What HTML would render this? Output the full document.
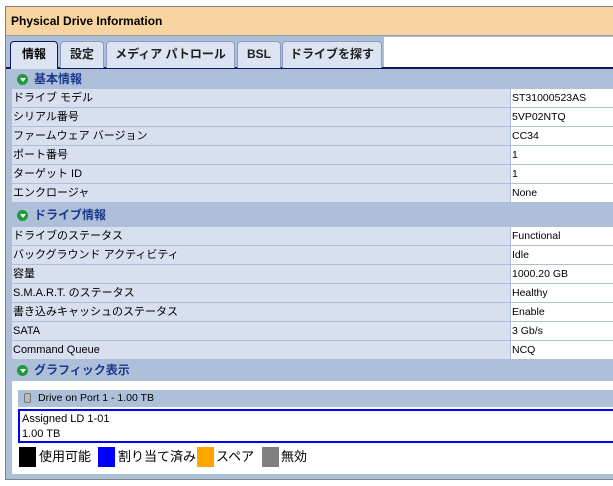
<!DOCTYPE html>
<html><head><meta charset="utf-8"><style>
*{margin:0;padding:0;box-sizing:border-box}
body{width:613px;height:486px;background:#fff;font-family:"Liberation Sans","Noto Sans CJK JP",sans-serif;font-size:11px;color:#000;position:relative;overflow:hidden}
.abs{position:absolute}
#frame{left:5px;top:6px;width:620px;height:474px;border:1px solid #808080;border-right:none;background:#aebfda}
#hdr{left:6px;top:7px;width:607px;height:29px;background:#f8d5a0;border-bottom:1px solid #999;font-weight:bold;font-size:12px;line-height:29px;padding-left:5px}
#tabsbg{left:6px;top:37px;width:378px;height:31px;background:#aebfda}
#tabline{left:6px;top:67px;width:607px;height:2px;background:#0a1a5e}
.tab{position:absolute;top:41px;height:27px;background:#dde4f1;border:1px solid #8a9ac0;border-bottom:none;border-radius:4px 4px 0 0;font-weight:bold;font-size:12px;line-height:25px;text-align:center;color:#202020}
.tab.sel{background:#dde4f1;border:1px solid #0a1a5e;border-bottom:none;height:28px;color:#000}
.sec{position:absolute;left:6px;width:607px;background:#aebfda;font-weight:bold;font-size:12px;color:#1a3a8a;line-height:21px;padding-left:28px}
.sec i{position:absolute;left:11px;top:5px;width:11px;height:11px;border-radius:50%;background:#1d9a3a}
.sec i:after{content:"";position:absolute;left:2.5px;top:3.5px;border-left:3px solid transparent;border-right:3px solid transparent;border-top:4px solid #fff}
.row{position:absolute;left:12px;width:601px;height:19px;border-bottom:1px solid #aebfda;background:#d8dfee;line-height:19px}
.row span{position:absolute;left:1px}
.row b{position:absolute;left:498px;top:0;width:110px;height:18px;background:#fff;border-left:1px solid #aebfda;font-weight:normal;padding-left:1px;font-size:10.5px}
#white{left:12px;top:381px;width:601px;height:93px;background:#fff}
#dh{left:18px;top:390px;width:595px;height:17px;background:#aebfda;font-size:10.5px;line-height:17px;padding-left:20px}
#box{left:18px;top:409px;width:600px;height:34px;border:2px solid #0000ff;line-height:15px;padding:1px 2px;font-size:11px}
.lg{position:absolute;top:447px;width:17px;height:20px}
.lt{position:absolute;top:447px;font-size:13px;line-height:20px}
</style></head><body>
<div id="frame" class="abs"></div>
<div id="hdr" class="abs">Physical Drive Information</div>
<div id="tabsbg" class="abs"></div>
<div class="abs" style="left:384px;top:37px;width:229px;height:31px;background:#fff"></div>
<div id="tabline" class="abs"></div>
<div class="tab sel" style="left:10px;width:48px">情報</div>
<div class="tab" style="left:60px;width:44px">設定</div>
<div class="tab" style="left:106px;width:129px">メディア パトロール</div>
<div class="tab" style="left:237px;width:44px">BSL</div>
<div class="tab" style="left:282px;width:100px">ドライブを探す</div>

<div class="sec" style="top:69px;height:20px"><i></i>基本情報</div>
<div class="row" style="top:89px"><span>ドライブ モデル</span><b>ST31000523AS</b></div>
<div class="row" style="top:108px"><span>シリアル番号</span><b>5VP02NTQ</b></div>
<div class="row" style="top:127px"><span>ファームウェア バージョン</span><b>CC34</b></div>
<div class="row" style="top:146px"><span>ポート番号</span><b>1</b></div>
<div class="row" style="top:165px"><span>ターゲット ID</span><b>1</b></div>
<div class="row" style="top:184px"><span>エンクロージャ</span><b>None</b></div>

<div class="sec" style="top:204px;height:22px;line-height:22px"><i style="top:6px"></i>ドライブ情報</div>
<div class="row" style="top:227px"><span>ドライブのステータス</span><b>Functional</b></div>
<div class="row" style="top:246px"><span>バックグラウンド アクティビティ</span><b>Idle</b></div>
<div class="row" style="top:265px"><span>容量</span><b>1000.20 GB</b></div>
<div class="row" style="top:284px"><span>S.M.A.R.T. のステータス</span><b>Healthy</b></div>
<div class="row" style="top:303px"><span>書き込みキャッシュのステータス</span><b>Enable</b></div>
<div class="row" style="top:322px"><span>SATA</span><b>3 Gb/s</b></div>
<div class="row" style="top:341px"><span>Command Queue</span><b>NCQ</b></div>

<div class="sec" style="top:360px;height:21px"><i></i>グラフィック表示</div>
<div id="white" class="abs"></div>
<div id="dh" class="abs"><span style="position:absolute;left:6px;top:3px;width:7px;height:10px;background:#bbb;border:1px solid #777;border-radius:2px"></span>Drive on Port 1 - 1.00 TB</div>
<div id="box" class="abs">Assigned LD 1-01<br>1.00 TB</div>
<div class="lg" style="left:19px;background:#000"></div><div class="lt" style="left:39px">使用可能</div>
<div class="lg" style="left:98px;background:#00f"></div><div class="lt" style="left:118px">割り当て済み</div>
<div class="lg" style="left:197px;background:#ffa500"></div><div class="lt" style="left:216px">スペア</div>
<div class="lg" style="left:262px;background:#808080"></div><div class="lt" style="left:281px">無効</div>
<div class="abs" style="left:6px;top:479px;width:607px;height:1px;background:#808080"></div>
</body></html>
